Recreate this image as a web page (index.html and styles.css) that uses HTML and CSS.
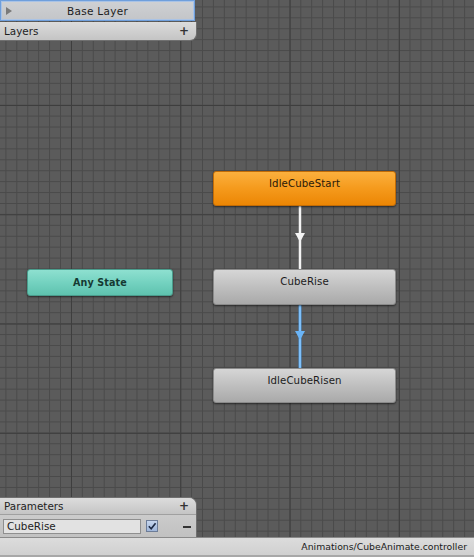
FILE: index.html
```html
<!DOCTYPE html>
<html>
<head>
<meta charset="utf-8">
<link rel="stylesheet" href="styles.css">
</head>
<body>
<div class="editor">
  <div class="graph">
    <svg class="edges" width="474" height="537" viewBox="0 0 474 537">
      <line x1="300" y1="206" x2="300" y2="269" stroke="#f4f4f4" stroke-width="2.5"/>
      <polygon points="295,233 305,233 300,242" fill="#f4f4f4"/>
      <line x1="300" y1="305" x2="300" y2="368" stroke="#4f9fe8" stroke-width="3.5" opacity="0.6"/>
      <line x1="300" y1="305" x2="300" y2="368" stroke="#7ec0fa" stroke-width="2"/>
      <polygon points="295,331 305,331 300,340" fill="#6ab4f6"/>
    </svg>

    <div class="node node-orange state n-start">IdleCubeStart</div>
    <div class="node node-gray state n-rise">CubeRise</div>
    <div class="node node-gray state n-risen">IdleCubeRisen</div>
    <div class="node node-teal n-any">Any State</div>

    <div class="layers-panel">
      <div class="layer-tab"><span class="tri"></span><span class="tab-label">Base Layer</span></div>
      <div class="panel-head layers-head"><span>Layers</span><span class="pm">+</span></div>
    </div>

    <div class="params-panel">
      <div class="panel-head params-head"><span>Parameters</span><span class="pm">+</span></div>
      <div class="param-row">
        <div class="field">CubeRise</div>
        <div class="check">
          <svg width="11" height="11" viewBox="0 0 11 11"><path d="M2 5.2 L4.6 8 L9.4 1.8" fill="none" stroke="#1d2a44" stroke-width="1.8"/></svg>
        </div>
        <div class="minus"></div>
      </div>
    </div>
  </div>
  <div class="statusbar">Animations/CubeAnimate.controller</div>
</div>
</body>
</html>
```

FILE: styles.css
```css
html, body {
  margin: 0;
  padding: 0;
  background: #5a5a5a;
}

.editor {
  width: 474px;
  height: 557px;
  display: flex;
  flex-direction: column;
  overflow: hidden;
  font-family: "DejaVu Sans", sans-serif;
  color: #1e1e1e;
}

.graph {
  position: relative;
  flex: 1;
  background-color: #5b5b5b;
  background-image:
    linear-gradient(to right, #3e3e3e 1px, transparent 1px),
    linear-gradient(to bottom, #3e3e3e 1px, transparent 1px),
    linear-gradient(to right, #4a4a4a 1px, transparent 1px),
    linear-gradient(to bottom, #4a4a4a 1px, transparent 1px);
  background-size:
    109.3px 100%,
    100% 109.3px,
    10.93px 100%,
    100% 10.93px;
  background-position:
    71px 0,
    0 105px,
    5.4px 0,
    0 6.4px;
}

.edges {
  position: absolute;
  left: 0;
  top: 0;
}

.node {
  position: absolute;
  box-sizing: border-box;
  display: flex;
  align-items: center;
  justify-content: center;
  font-size: 10.2px;
  letter-spacing: 0.1px;
  border-radius: 3px;
  box-shadow: 0 1px 2px rgba(0, 0, 0, 0.55);
}

.state {
  align-items: flex-start;
  padding-top: 5px;
  line-height: 13px;
}

.node-orange {
  background: linear-gradient(to bottom, #fbb03e 0%, #f59a1c 50%, #ec8604 100%);
  border: 1px solid #c26c06;
  color: #2a1a08;
}

.node-gray {
  background: linear-gradient(to bottom, #d6d6d6 0%, #bfbfbf 50%, #a9a9a9 100%);
  border: 1px solid #8a8a8a;
  color: #1c1c1c;
}

.node-teal {
  background: linear-gradient(to bottom, #8ee0d0 0%, #74d2c0 50%, #5ec2ae 100%);
  border: 1px solid #4a9c8c;
  color: #163a33;
  font-weight: bold;
  font-size: 9.6px;
}

.n-start { left: 213px; top: 171px; width: 183px; height: 35px; }
.n-rise  { left: 213px; top: 269px; width: 183px; height: 36px; }
.n-risen { left: 213px; top: 368px; width: 183px; height: 35px; }
.n-any   { left: 27px;  top: 269px; width: 146px; height: 27px; }

/* Layers panel (top-left overlay) */
.layers-panel {
  position: absolute;
  left: 0;
  top: 0;
  width: 197px;
  display: flex;
  flex-direction: column;
}

.layer-tab {
  box-sizing: border-box;
  height: 21px;
  width: 195px;
  border: 1px solid #6f9fdc;
  box-shadow: inset 0 0 0 1px #a9c3e6;
  background: linear-gradient(to bottom, #cfd1d4, #c3c5c8);
  display: flex;
  align-items: center;
  position: relative;
  font-size: 10.5px;
}

.tri {
  width: 0;
  height: 0;
  margin-left: 5px;
  border-top: 4px solid transparent;
  border-bottom: 4px solid transparent;
  border-left: 6px solid #7a7a7a;
}

.tab-label {
  flex: 1;
  text-align: center;
  margin-right: 11px;
  letter-spacing: 0.3px;
}

.panel-head {
  box-sizing: border-box;
  display: flex;
  align-items: center;
  justify-content: space-between;
  padding: 0 7px 0 4px;
  font-size: 10.4px;
  background: linear-gradient(to bottom, #dcdcdc, #c4c4c4);
}

.layers-head {
  margin-top: 1px;
  height: 19px;
  border-right: 1px solid #707070;
  border-bottom: 1px solid #707070;
  border-bottom-right-radius: 7px;
}

.pm {
  font-weight: bold;
  font-size: 12px;
  color: #333;
}

/* Parameters panel (bottom-left overlay) */
.params-panel {
  position: absolute;
  left: 0;
  bottom: 0;
  width: 196px;
  display: flex;
  flex-direction: column;
  background: #c6c6c6;
  border-top-right-radius: 8px;
  border-right: 1px solid #707070;
  border-top: 1px solid #707070;
}

.params-head {
  height: 17px;
  border-top-right-radius: 7px;
  border-bottom: 1px solid #a0a0a0;
}

.param-row {
  height: 22px;
  display: flex;
  align-items: center;
  padding-left: 3px;
  background: linear-gradient(to bottom, #cbcbcb, #c1c1c1);
}

.field {
  box-sizing: border-box;
  width: 138px;
  height: 15px;
  border: 1px solid #8f8f8f;
  background: #e2e2e2;
  font-size: 10.4px;
  line-height: 13px;
  padding-left: 3px;
}

.check {
  box-sizing: border-box;
  width: 12px;
  height: 12px;
  margin-left: 5px;
  border: 1px solid #6d7d98;
  background: linear-gradient(to bottom, #c6d6ee, #9fb6da);
  display: flex;
  align-items: center;
  justify-content: center;
}

.minus {
  width: 8px;
  height: 2px;
  background: #333;
  margin-left: 25px;
  margin-top: 2px;
}

.statusbar {
  box-sizing: border-box;
  height: 20px;
  border-top: 1px solid #8a8a8a;
  border-bottom: 2px solid #a8a8a8;
  background: linear-gradient(to bottom, #dcdcdc, #d0d0d0);
  font-size: 9.3px;
  text-align: right;
  padding-right: 7px;
  line-height: 17px;
  color: #1a1a1a;
}
```
